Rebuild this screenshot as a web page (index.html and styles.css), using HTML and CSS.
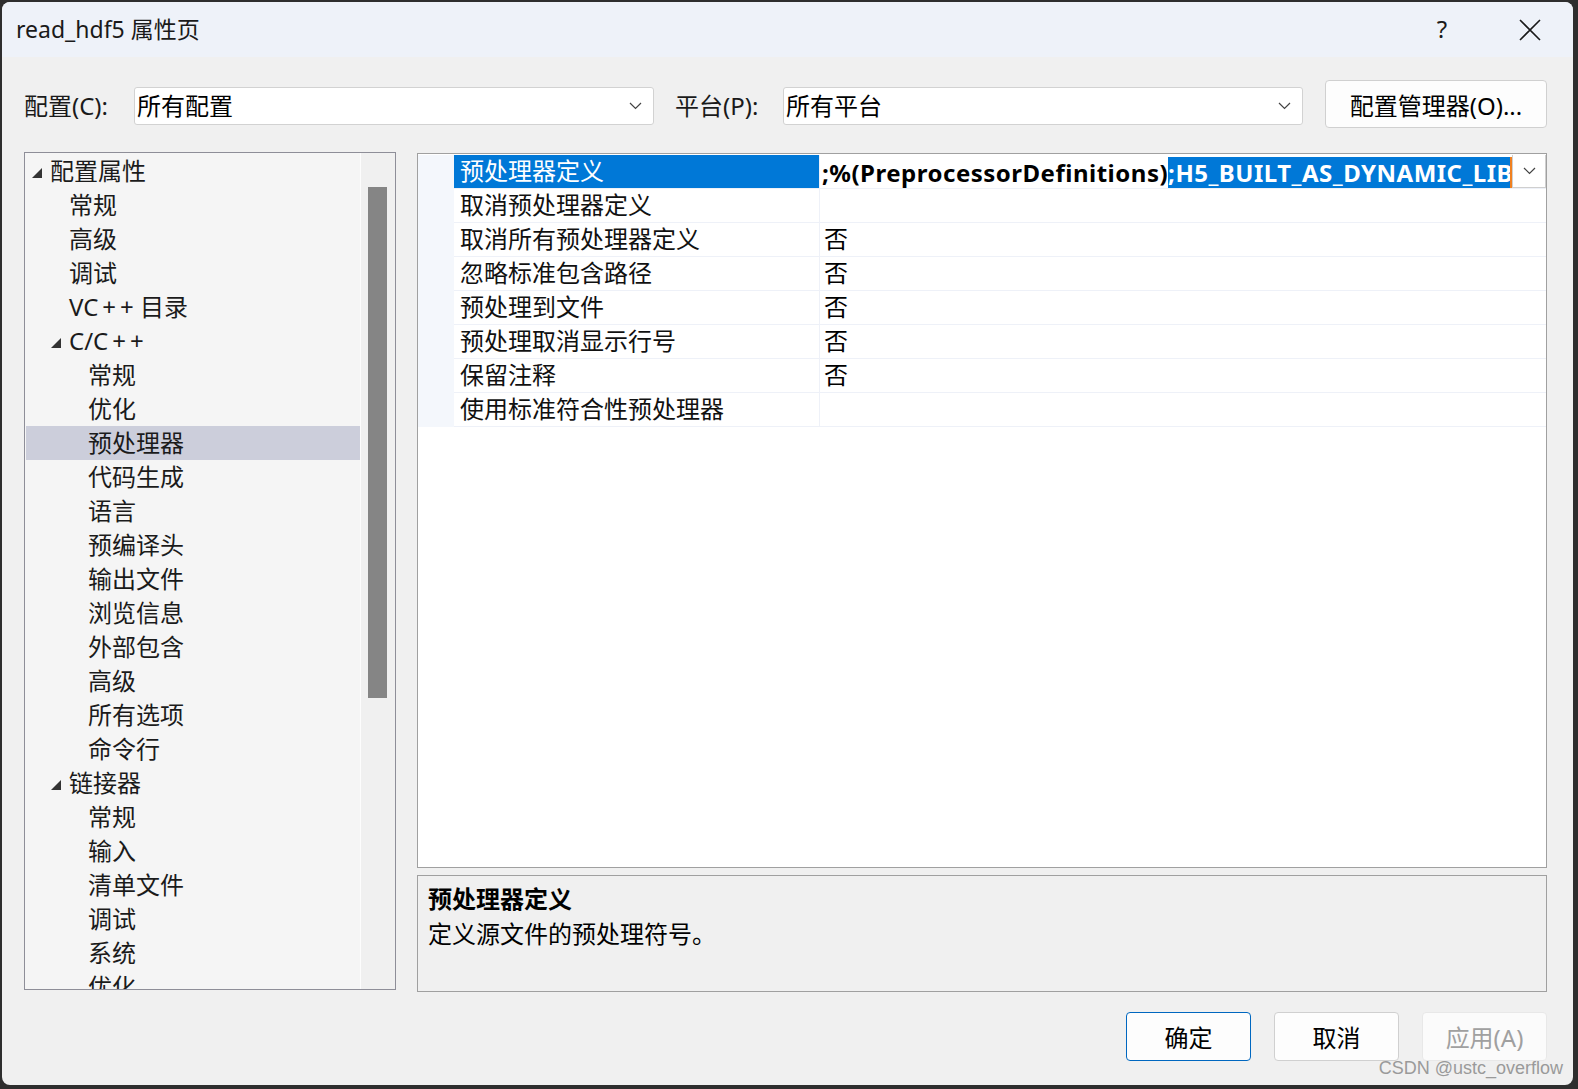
FILE: index.html
```html
<!DOCTYPE html>
<html lang="zh-CN">
<head>
    <meta charset="UTF-8">
    <title>read_hdf5 属性页</title>
    <link rel="stylesheet" href="styles.css">
</head>
<body>
    <div class="window">
        <div class="titlebar">
            <span class="titlebar__text">read_hdf5 属性页</span>
            <span class="titlebar__help">?</span>
            <span class="titlebar__close">
                <svg width="22" height="22" viewBox="0 0 22 22"><path d="M1 1 L21 21 M21 1 L1 21" stroke="#1a1a1a" stroke-width="1.6" fill="none"/></svg>
            </span>
        </div>

        <div class="config-row">
            <span class="config-row__label">配置(C):</span>
            <div class="combo">
                <span>所有配置</span>
                <svg class="chevron" width="13" height="8" viewBox="0 0 13 8"><path d="M1 1 L6.5 6.5 L12 1" stroke="#444" stroke-width="1.2" fill="none"/></svg>
            </div>
            <span class="config-row__label config-row__label--platform">平台(P):</span>
            <div class="combo">
                <span>所有平台</span>
                <svg class="chevron" width="13" height="8" viewBox="0 0 13 8"><path d="M1 1 L6.5 6.5 L12 1" stroke="#444" stroke-width="1.2" fill="none"/></svg>
            </div>
            <button class="btn btn--manager">配置管理器(O)...</button>
        </div>

        <div class="main">
            <div class="tree">
                <div class="tree__list" id="tree"></div>
                <div class="tree__scroll"><div class="tree__thumb"></div></div>
            </div>

            <div class="right">
                <div class="grid">
                    <div class="prop-row">
                        <div class="prop-row__margin"></div>
                        <div class="prop-row__name prop-row__name--selected">预处理器定义</div>
                        <div class="prop-row__value prop-row__value--edit">
                            <span class="edit-text">;%(PreprocessorDefinitions)<span class="edit-text__sel">;H5_BUILT_AS_DYNAMIC_LIB</span></span>
                            <span class="edit-caret"></span>
                            <span class="edit-drop">
                                <svg width="13" height="8" viewBox="0 0 13 8"><path d="M1 1 L6.5 6.5 L12 1" stroke="#444" stroke-width="1.2" fill="none"/></svg>
                            </span>
                        </div>
                    </div>
                    <div class="prop-row">
                        <div class="prop-row__margin"></div>
                        <div class="prop-row__name">取消预处理器定义</div>
                        <div class="prop-row__value"></div>
                    </div>
                    <div class="prop-row">
                        <div class="prop-row__margin"></div>
                        <div class="prop-row__name">取消所有预处理器定义</div>
                        <div class="prop-row__value">否</div>
                    </div>
                    <div class="prop-row">
                        <div class="prop-row__margin"></div>
                        <div class="prop-row__name">忽略标准包含路径</div>
                        <div class="prop-row__value">否</div>
                    </div>
                    <div class="prop-row">
                        <div class="prop-row__margin"></div>
                        <div class="prop-row__name">预处理到文件</div>
                        <div class="prop-row__value">否</div>
                    </div>
                    <div class="prop-row">
                        <div class="prop-row__margin"></div>
                        <div class="prop-row__name">预处理取消显示行号</div>
                        <div class="prop-row__value">否</div>
                    </div>
                    <div class="prop-row">
                        <div class="prop-row__margin"></div>
                        <div class="prop-row__name">保留注释</div>
                        <div class="prop-row__value">否</div>
                    </div>
                    <div class="prop-row">
                        <div class="prop-row__margin"></div>
                        <div class="prop-row__name">使用标准符合性预处理器</div>
                        <div class="prop-row__value"></div>
                    </div>
                </div>

                <div class="desc">
                    <div class="desc__title">预处理器定义</div>
                    <div class="desc__text">定义源文件的预处理符号。</div>
                </div>
            </div>
        </div>

        <div class="buttons">
            <button class="btn btn--dialog btn--default">确定</button>
            <button class="btn btn--dialog">取消</button>
            <button class="btn btn--dialog btn--disabled">应用(A)</button>
        </div>

        <div class="watermark">CSDN @ustc_overflow</div>
    </div>

    <script>
        // [level, label, expandable, selected]
        const treeItems = [
            [1, "配置属性", true],
            [2, "常规"], [2, "高级"], [2, "调试"], [2, "VC++ 目录"],
            [2, "C/C++", true],
            [3, "常规"], [3, "优化"], [3, "预处理器", false, true], [3, "代码生成"],
            [3, "语言"], [3, "预编译头"], [3, "输出文件"], [3, "浏览信息"],
            [3, "外部包含"], [3, "高级"], [3, "所有选项"], [3, "命令行"],
            [2, "链接器", true],
            [3, "常规"], [3, "输入"], [3, "清单文件"], [3, "调试"],
            [3, "系统"], [3, "优化"]
        ];

        const tree = document.getElementById("tree");

        treeItems.forEach(([level, label, expandable, selected]) => {
            const row = document.createElement("div");
            row.className = "tree__row" + (selected ? " tree__row--selected" : "");
            row.style.paddingLeft = (5 + 19 * (level - 1)) + "px";

            const toggle = document.createElement("span");
            toggle.className = "tree__toggle";
            if (expandable) {
                toggle.innerHTML = '<svg width="10" height="10" viewBox="0 0 10 10"><polygon points="10,0 10,10 0,10" fill="#333"/></svg>';
            }
            row.appendChild(toggle);

            const text = document.createElement("span");
            // the "+" signs are spaced out in the original font
            text.innerHTML = label.replace("++", '<span class="plus">+</span><span class="plus">+</span>');
            row.appendChild(text);

            tree.appendChild(row);
        });
    </script>
</body>
</html>
```

FILE: styles.css
```css
* {
   box-sizing: border-box;
   margin: 0;
   padding: 0;
}

body {
   background-color: #2e2e2e;
   font-family: "Noto Sans", "Noto Sans CJK SC", sans-serif;
   font-size: 24px;
   line-height: 1.2;
   color: #000;
   overflow: hidden;
}

.window {
   position: relative;
   width: 1571px;
   height: 1083px;
   margin: 2px 0 0 2px;
   background-color: #f0f0f0;
   border-radius: 8px;
   overflow: hidden;
   display: flex;
   flex-direction: column;
}

/* title bar */
.titlebar {
   height: 55px;
   flex-shrink: 0;
   background-color: #eef2f9;
   display: flex;
   align-items: center;
   padding-left: 14px;
}

.titlebar__text {
   flex: 1;
   font-size: 23px;
   color: #1a1a1a;
}

.titlebar__help {
   width: 30px;
   text-align: center;
   font-family: "Noto Sans", sans-serif;
   font-size: 24px;
   margin-right: 62px;
   color: #1a1a1a;
}

.titlebar__close {
   width: 22px;
   height: 22px;
   margin-right: 32px;
   display: flex;
}

/* configuration row */
.config-row {
   margin-top: 23px;
   height: 48px;
   display: flex;
   align-items: center;
   padding: 0 26px 0 22px;
}

.config-row__label {
   width: 110px;
   margin-top: 4px;
   color: #1a1a1a;
}

.config-row__label--platform {
   width: 108px;
   margin-left: 21px;
}

.combo {
   width: 520px;
   height: 38px;
   margin-top: 4px;
   background-color: #fff;
   border: 1px solid #d2d2d2;
   border-radius: 3px;
   display: flex;
   align-items: center;
   justify-content: space-between;
   padding: 0 11px 0 2px;
}

.btn {
   font-family: inherit;
   font-size: 24px;
   color: #000;
   background-color: #fdfdfd;
   border: 1px solid #d0d0d0;
   border-radius: 4px;
   cursor: pointer;
}

.btn--manager {
   width: 222px;
   height: 48px;
   margin-left: 22px;
}

/* main area */
.main {
   margin-top: 24px;
   display: flex;
   gap: 21px;
   padding-left: 22px;
   height: 840px;
   flex-shrink: 0;
}

.tree {
   width: 372px;
   height: 838px;
   border: 1px solid #8e8e98;
   background-color: #f5f5f5;
   display: flex;
}

.tree__list {
   flex: 1;
   overflow: hidden;
   padding: 1px 0 0 1px;
   border-right: 1px solid #fdfdfd;
}

.tree__row {
   height: 34px;
   display: flex;
   align-items: center;
   color: #1b1b1b;
   white-space: nowrap;
}

.tree__row--selected {
   background-color: #cccedb;
}

.tree__toggle {
   width: 19px;
   flex-shrink: 0;
   display: flex;
   align-items: center;
   padding-left: 1px;
   padding-top: 3px;
}

.plus {
   margin-left: 4px;
}

.tree__scroll {
   width: 34px;
   background-color: #f0f0f0;
}

.tree__thumb {
   width: 19px;
   height: 511px;
   margin: 34px 0 0 7px;
   background-color: #858585;
}

.right {
   width: 1130px;
   display: flex;
   flex-direction: column;
   gap: 7px;
   margin-top: 1px;
}

/* property grid */
.grid {
   height: 715px;
   background-color: #fff;
   border: 1px solid #a0a0a0;
   padding-top: 1px;
}

.prop-row {
   display: grid;
   grid-template-columns: 36px 366px 1fr;
   height: 34px;
}

.prop-row__margin {
   background-color: #f4f7fc;
}

.prop-row__name,
.prop-row__value {
   border-bottom: 1px solid #eef1f8;
   display: flex;
   align-items: center;
   white-space: nowrap;
   overflow: hidden;
}

.prop-row__name {
   padding-left: 6px;
   border-right: 1px solid #eef1f8;
   color: #111;
}

.prop-row__name--selected {
   background-color: #0078d7;
   color: #fff;
}

.prop-row__value {
   padding-left: 4px;
}

.prop-row__value--edit {
   padding: 1px 0 0 2px;
   position: relative;
}

.edit-text {
   font-weight: bold;
   letter-spacing: 0.5px;
   flex: 1;
   overflow: hidden;
   white-space: nowrap;
   height: 31px;
   line-height: 31px;
}

.edit-text__sel {
   background-color: #0078d7;
   color: #fff;
   display: inline-block;
   height: 31px;
}

.edit-caret {
   width: 2px;
   height: 31px;
   background-color: #f08020;
}

.edit-drop {
   width: 34px;
   height: 34px;
   margin-top: -2px;
   background-color: #fff;
   border: 1px solid #cfcfcf;
   display: flex;
   align-items: center;
   justify-content: center;
}

/* description */
.desc {
   height: 117px;
   border: 1px solid #a0a0a0;
   background-color: #f0f0f0;
   padding: 5px 10px;
   line-height: 35px;
}

.desc__title {
   font-weight: bold;
}

/* dialog buttons */
.buttons {
   margin-top: 20px;
   display: flex;
   justify-content: flex-end;
   gap: 23px;
   padding-right: 26px;
}

.btn--dialog {
   width: 125px;
   height: 49px;
}

.btn--default {
   border-color: #0067c0;
}

.btn--disabled {
   background-color: #fbfbfb;
   border-color: #e8e8e8;
   color: #a0a0a0;
}

.watermark {
   position: absolute;
   right: 10px;
   bottom: 5px;
   font-family: "Liberation Sans", sans-serif;
   font-size: 18px;
   color: #9a9a9a;
}
```
